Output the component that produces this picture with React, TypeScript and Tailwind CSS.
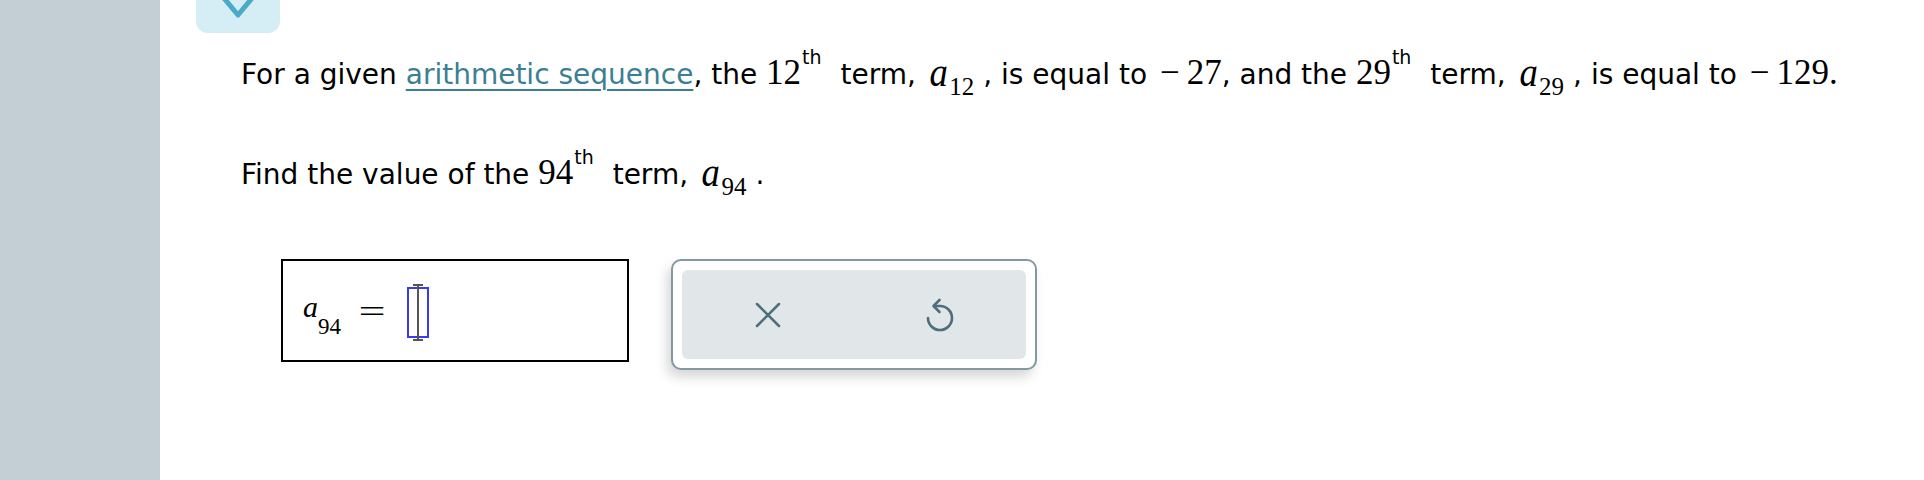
import React from "react";

const sans = "font-['DejaVu_Sans',Verdana,sans-serif]";
const serif = "font-['Liberation_Serif','Times_New_Roman',serif]";

function Sup({ children }: { children: React.ReactNode }) {
  return <span className={`${sans} text-[19px] leading-[0] align-[20px] ml-[1px] mr-[10px]`}>{children}</span>;
}

function Num({ children }: { children: React.ReactNode }) {
  return <span className={`${serif} text-[35px] leading-[0]`}>{children}</span>;
}

function Minus() {
  return <span className={`${serif} text-[35px] leading-[0] ml-[4px] mr-[7px]`}>−</span>;
}

function Var({ sub }: { sub: string }) {
  return (
    <span className="whitespace-nowrap ml-[5px]">
      <span className={`${serif} inline-block italic text-[35px] leading-[0] scale-x-[1.05] scale-y-[1.2]`}>a</span>
      <span className={`${serif} text-[25px] leading-[0] align-[-11px] ml-[2px] mr-[9px]`}>{sub}</span>
    </span>
  );
}

export default function App() {
  return (
    <div className="flex w-[1924px] h-[480px] bg-white text-black overflow-hidden">
      <div className="w-[160px] h-full bg-[#c4cfd5] shrink-0" />
      <div className="flex-1 flex flex-col">
        <div className="ml-[36px] w-[84px] h-[33px] bg-[#d5edf4] rounded-b-[12px] flex justify-center overflow-hidden">
          <svg width="40" height="24" viewBox="0 0 40 24">
            <path d="M5 -3 L20 15 L35 -3" fill="none" stroke="#4aaac8" strokeWidth="5" strokeLinejoin="round" strokeLinecap="round" />
          </svg>
        </div>

        <p className={`${sans} ml-[81px] mt-[22px] text-[28px] leading-[40px] whitespace-nowrap`}>
          For a given{" "}
          <span className="text-[#3a7f94] underline underline-offset-[5px] decoration-[2px]">arithmetic sequence</span>, the{" "}
          <Num>12</Num>
          <Sup>th</Sup> term, <Var sub="12" />, is equal to <Minus />
          <Num>27</Num>, and the <Num>29</Num>
          <Sup>th</Sup> term, <Var sub="29" />, is equal to <Minus />
          <Num>129.</Num>
        </p>

        <p className={`${sans} ml-[81px] mt-[60px] text-[28px] leading-[40px] whitespace-nowrap`}>
          Find the value of the <Num>94</Num>
          <Sup>th</Sup> term, <Var sub="94" />.
        </p>

        <div className="ml-[121px] mt-[64px] flex items-start gap-[42px]">
          <div className="w-[348px] h-[103px] border-2 border-black flex items-center pl-[20px]">
            <div className={`${serif} flex items-center mt-[4px]`}>
              <span className="relative -top-[6px] italic text-[30px] leading-none">a</span>
              <span className="relative top-[14px] text-[23px] leading-none">94</span>
              <span className="ml-[22px] inline-block scale-x-[1.5] text-[32px] leading-none relative -top-[2px]">=</span>
              <span className="relative ml-[26px] w-[22px] h-[51px] border-2 border-[#3a3af0]">
                <span className="absolute left-1/2 -translate-x-1/2 -top-[4px] w-[2px] h-[55px] bg-[#555]" />
                <span className="absolute left-1/2 -translate-x-1/2 -top-[5px] w-[10px] h-[2px] bg-[#555]" />
                <span className="absolute left-1/2 -translate-x-1/2 -bottom-[5px] w-[10px] h-[2px] bg-[#555]" />
              </span>
            </div>
          </div>

          <div className="w-[366px] h-[111px] border-2 border-[#8399a2] rounded-[10px] bg-white p-[9px] shadow-[-4px_7px_12px_rgba(0,0,0,0.16)]">
            <div className="w-full h-full bg-[#e1e6e9] rounded-[6px] flex items-center">
              <div className="flex-1 flex justify-center">
                <svg width="28" height="28" viewBox="0 0 28 28" fill="none" stroke="#4e6e7b" strokeWidth="2.5" strokeLinecap="round">
                  <path d="M3 3 L25 25 M25 3 L3 25" />
                </svg>
              </div>
              <div className="flex-1 flex justify-center">
                <svg width="32" height="34" viewBox="0 0 32 34" fill="none" stroke="#4e6e7b" strokeWidth="2.6" strokeLinecap="round" strokeLinejoin="round">
                  <path d="M10 8 H16 A12 12 0 1 1 4 20" />
                  <path d="M15.5 2 L9.5 8 L15.5 14" />
                </svg>
              </div>
            </div>
          </div>
        </div>
      </div>
    </div>
  );
}
